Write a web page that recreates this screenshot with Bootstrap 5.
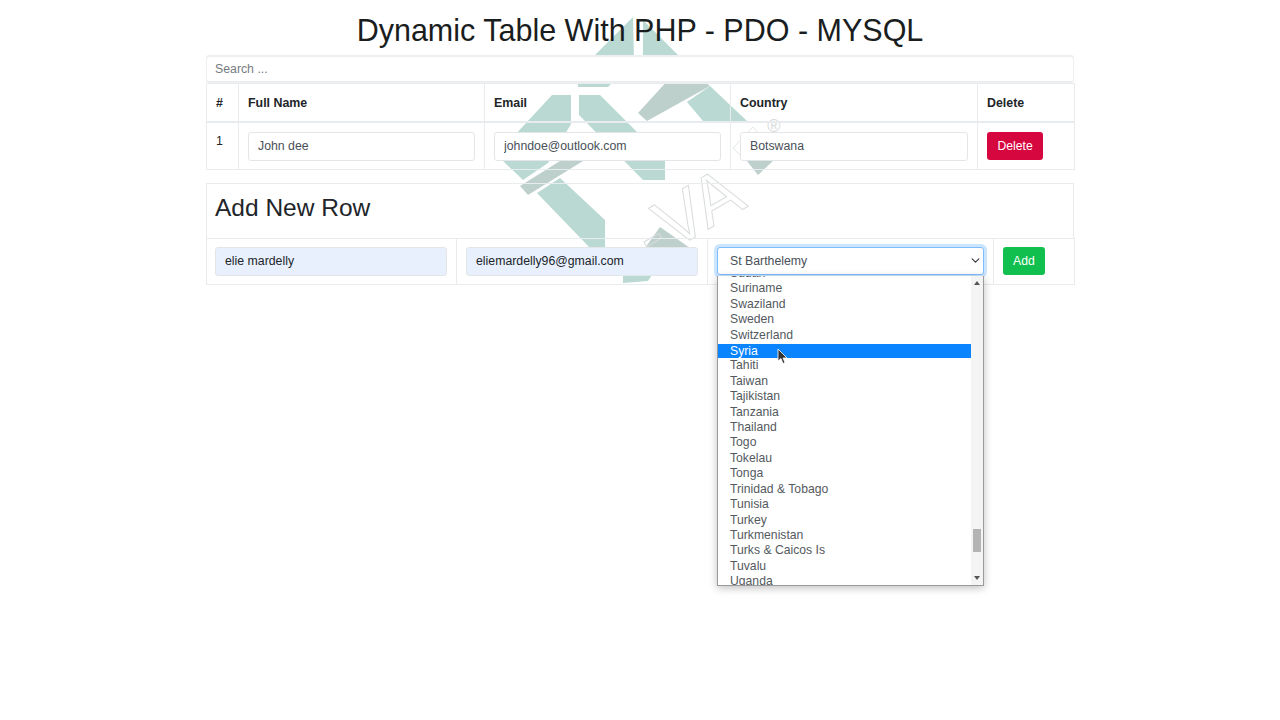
<!DOCTYPE html>
<html lang="en">
  <head>
    <meta charset="UTF-8" />
    <title>Dynamic Table With PHP - PDO - MYSQL</title>
    <link
      href="https://cdn.jsdelivr.net/npm/bootstrap@5.3.2/dist/css/bootstrap.min.css"
      rel="stylesheet"
    />
    <style>
      body {
        background: #fff;
        color: #212529;
        font-family: "Liberation Sans", Arial, sans-serif;
        font-size: 12.3px;
        height: 720px;
        overflow: hidden;
        position: relative;
      }
      .wmark {
        position: absolute;
        left: 0;
        top: 0;
        width: 1280px;
        height: 720px;
      }
      .wmark text {
        font-family: "Liberation Sans", Arial, sans-serif;
      }
      .page-wrap {
        position: relative;
        width: 868px;
        margin: 0 auto;
      }
      .page-title {
        font-size: 30.5px;
        line-height: 61px;
        height: 55px;
        margin: 0;
        text-align: center;
        font-weight: 400;
        color: #1a1d20;
      }
      .page-wrap .form-control,
      .page-wrap .form-select {
        font-size: 12.3px;
        color: #495057;
        border-color: #e3e6e9;
        border-radius: 3px;
        height: 29px;
        min-height: 0;
        padding: 0 9px;
        line-height: 27px;
      }
      .page-wrap .search-box.form-control {
        height: 28px;
        border-width: 2px 1px;
        border-color: #eceef0;
        line-height: 22px;
        padding-left: 8px;
      }
      .search-box::placeholder {
        color: #777c81;
      }
      .grid-tbl {
        margin: 0;
        table-layout: fixed;
        width: 868px;
        background: transparent;
        --bs-table-bg: transparent;
        --bs-table-border-color: #e9ecef;
      }
      .grid-tbl th,
      .grid-tbl td {
        padding: 9px 9px 8px;
        font-size: 12.4px;
        background: transparent;
        vertical-align: top;
      }
      .grid-tbl thead th {
        height: 38px;
        padding-top: 9.5px;
        line-height: 18px;
        border-bottom: 2px solid #e9ecef;
        color: #212529;
      }
      .grid-tbl .add-row td {
        padding: 8px 9px;
      }
      .grid-tbl .add-row td:first-child {
        padding-left: 8px;
      }
      .row-num {
        line-height: 18px;
      }
      .c-num { width: 32px; }
      .c-name { width: 246px; }
      .c-mail { width: 246px; }
      .c-land { width: 247px; }
      .c-act { width: 97px; }
      .a-name { width: 250px; }
      .a-mail { width: 251px; }
      .a-land { width: 286px; }
      .a-act { width: 81px; }
      .add-box {
        margin-top: 13px;
      }
      .add-head {
        height: 55px;
        border: 1px solid #e9ecef;
        border-bottom: 0;
        font-size: 24.5px;
        font-weight: 400;
        line-height: 48px;
        padding: 0 8px;
        margin: 0;
        color: #212529;
      }
      .page-wrap .auto-fill.form-control {
        background: #e8f0fe;
        color: #212529;
      }
      .page-wrap .land-open.form-select {
        height: 28px;
        border: 1px solid #80bdff;
        box-shadow: 0 0 0 3px rgba(0, 123, 255, 0.2);
        padding-left: 12px;
        background-position: right 3px center;
        background-size: 9px 9px;
      }
      .btn-del,
      .btn-add {
        font-size: 12.2px;
        line-height: 18px;
        padding: 5px 10.5px;
        color: #fff;
        border: 0;
        border-radius: 3px;
      }
      .btn-del {
        background: #d6073f;
      }
      .btn-add {
        background: #10bf4e;
        padding: 5px 10px;
      }
      .land-list {
        position: absolute;
        left: 511px;
        top: 276px;
        width: 267px;
        height: 310px;
        background: #fff;
        border: 1px solid #9a9a9a;
        border-top: 0;
        box-shadow: 0 2px 8px rgba(0, 0, 0, 0.25);
        overflow: hidden;
      }
      .land-items {
        margin: -10px 0 0;
        padding: 0;
        list-style: none;
      }
      .land-items li {
        height: 15.42px;
        line-height: 15.42px;
        padding-left: 12px;
        color: #54595e;
        font-size: 12.2px;
        white-space: nowrap;
      }
      .land-items li.picked {
        background: #0a84ff;
        color: #fff;
        height: 14px;
        margin-top: 1.42px;
        line-height: 14px;
      }
      .land-bar {
        width: 12px;
        background: #f4f4f4;
        flex: none;
      }
      .bar-up,
      .bar-down {
        width: 0;
        height: 0;
        margin: 5px auto;
        border-left: 3px solid transparent;
        border-right: 3px solid transparent;
      }
      .bar-up {
        border-bottom: 4px solid #555;
      }
      .bar-down {
        border-top: 4px solid #555;
      }
      .bar-thumb {
        width: 8px;
        height: 23px;
        margin: 0 auto 19px;
        background: #b4b4b4;
      }
      .mouse-arrow {
        position: absolute;
        left: 777px;
        top: 349px;
        width: 11px;
        height: 16px;
      }
    </style>
  </head>
  <body>
    <svg class="wmark" viewBox="0 0 1280 720">
      <g fill="#b9d9d2">
        <polygon points="633,17 634,61 608,87 578,87 578,72" />
        <polygon points="643,20 700,77 670,83 643,83" />
        <polygon points="687,102 710,86 747,121 703,121" />
        <polygon points="552,95 571,95 571,124 548,163 523,180 503,161 503,148" />
        <polygon points="579,95 600,95 665,160 665,180 643,180 579,115" />
        <polygon points="537,193 560,178 605,220 605,250 592,250" />
        <polygon points="623,270 655,270 648,281 623,283" />
      </g>
      <g fill="#bdd0cb">
        <polygon points="638,113 647,121 710,86 700,78 670,78" />
        <polygon points="520,186 560,161 583,161 528,195" />
        <polygon points="660,227 690,248 645,248" />
        <polygon points="747,161 773,161 758,175" />
      </g>
      <polygon points="733,148 753,127 760,135 742,157" fill="none" stroke="#e3e6e6" />
      <text x="774" y="132" font-size="18" fill="#d8dcdc" text-anchor="middle">®</text>
      <text
        x="0"
        y="0"
        font-size="70"
        fill="none"
        stroke="#d9dcdc"
        stroke-width="1"
        transform="translate(652,262) rotate(-30)"
      >-VA</text>
    </svg>

    <div class="page-wrap">
      <h1 class="page-title">Dynamic Table With PHP - PDO - MYSQL</h1>
      <input type="text" class="form-control search-box" placeholder="Search ..." />
      <table class="table table-bordered grid-tbl">
        <colgroup>
          <col class="c-num" /><col class="c-name" /><col class="c-mail" /><col class="c-land" /><col class="c-act" />
        </colgroup>
        <thead>
          <tr>
            <th>#</th>
            <th>Full Name</th>
            <th>Email</th>
            <th>Country</th>
            <th>Delete</th>
          </tr>
        </thead>
        <tbody>
          <tr>
            <td class="row-num">1</td>
            <td><input type="text" class="form-control" value="John dee" /></td>
            <td><input type="text" class="form-control" value="johndoe@outlook.com" /></td>
            <td><input type="text" class="form-control" value="Botswana" /></td>
            <td><button type="button" class="btn btn-del">Delete</button></td>
          </tr>
        </tbody>
      </table>

      <div class="add-box">
        <h2 class="add-head">Add New Row</h2>
        <table class="table table-bordered grid-tbl">
          <colgroup>
            <col class="a-name" /><col class="a-mail" /><col class="a-land" /><col class="a-act" />
          </colgroup>
          <tbody>
            <tr class="add-row">
              <td><input type="text" class="form-control auto-fill" value="elie mardelly" /></td>
              <td><input type="text" class="form-control auto-fill" value="eliemardelly96@gmail.com" /></td>
              <td>
                <select class="form-select land-open">
                  <option>St Barthelemy</option>
                </select>
              </td>
              <td><button type="button" class="btn btn-add">Add</button></td>
            </tr>
          </tbody>
        </table>
      </div>

      <div class="land-list d-flex">
        <ul class="land-items flex-grow-1">
          <li>Sudan</li>
          <li>Suriname</li>
          <li>Swaziland</li>
          <li>Sweden</li>
          <li>Switzerland</li>
          <li class="picked">Syria</li>
          <li>Tahiti</li>
          <li>Taiwan</li>
          <li>Tajikistan</li>
          <li>Tanzania</li>
          <li>Thailand</li>
          <li>Togo</li>
          <li>Tokelau</li>
          <li>Tonga</li>
          <li>Trinidad &amp; Tobago</li>
          <li>Tunisia</li>
          <li>Turkey</li>
          <li>Turkmenistan</li>
          <li>Turks &amp; Caicos Is</li>
          <li>Tuvalu</li>
          <li>Uganda</li>
        </ul>
        <div class="land-bar d-flex flex-column">
          <div class="bar-up"></div>
          <div class="flex-grow-1"></div>
          <div class="bar-thumb"></div>
          <div class="bar-down"></div>
        </div>
      </div>
    </div>

    <svg class="mouse-arrow" viewBox="0 0 11 16">
      <path d="M1 0 L1 12 L4 9.5 L6 14.5 L8 13.5 L6 9 L10 9 Z" fill="#333" stroke="#fff" stroke-width="0.8" />
    </svg>

    <script src="https://cdn.jsdelivr.net/npm/bootstrap@5.3.2/dist/js/bootstrap.bundle.min.js"></script>
  </body>
</html>
